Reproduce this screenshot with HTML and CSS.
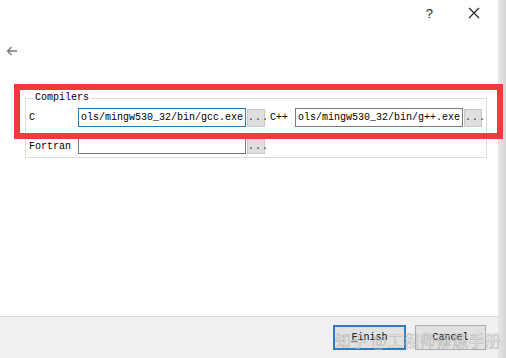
FILE: index.html
```html
<!DOCTYPE html>
<html lang="en">
<head>
    <meta charset="UTF-8">
    <title>Project Wizard - Compilers</title>
    <link rel="stylesheet" href="styles.css">
</head>
<body>
    <div class="window">
        <div class="main">
            <div class="titlebar">
                <span class="title-btn help">?</span>
                <span class="title-btn close">
                    <svg width="12" height="12" viewBox="0 0 12 12"><path d="M1 1 L11 11 M11 1 L1 11" stroke="#222" stroke-width="1.1" fill="none"/></svg>
                </span>
            </div>
            <div class="nav">
                <svg width="12" height="10" viewBox="0 0 12 10"><path d="M11 5 H1.5 M5.5 1 L1.5 5 L5.5 9" stroke="#7a7a7a" stroke-width="1.3" fill="none"/></svg>
            </div>

            <div class="content">
                <fieldset class="group">
                    <legend>Compilers</legend>
                    <div class="rows">
                        <label class="lbl">C</label>
                        <input class="path focused" type="text" value="ols/mingw530_32/bin/gcc.exe">
                        <button class="browse">...</button>
                        <label class="lbl lbl-cpp">C++</label>
                        <input class="path" type="text" value="ols/mingw530_32/bin/g++.exe">
                        <button class="browse">...</button>

                        <label class="lbl">Fortran</label>
                        <input class="path short" type="text" value="">
                        <button class="browse short">...</button>
                    </div>
                </fieldset>
            </div>

            <div class="footer">
                <button class="btn primary"><u>F</u>inish</button>
                <button class="btn">Cancel</button>
            </div>
        </div>
        <div class="edge"></div>

        <!-- annotation frame and watermark lie over the dialog -->
        <div class="highlight"></div>
        <div class="watermark">知乎 @工程师修炼手册</div>
    </div>
</body>
</html>
```

FILE: styles.css
```css
body {
    margin: 0;
    background: #fff;
    font-family: "Liberation Mono", "DejaVu Sans Mono", monospace;
    font-size: 10px;
    color: #000;
}

.window {
    position: relative;
    display: flex;
    width: 506px;
    height: 358px;
    overflow: hidden;
}

.main {
    display: flex;
    flex-direction: column;
    width: 498px;
}

.edge {
    width: 8px;
    background: linear-gradient(to right, #e6e6e6, #d6d6d6);
}

.titlebar {
    display: flex;
    justify-content: flex-end;
    align-items: center;
    height: 26px;
    padding-right: 18px;
}

.title-btn {
    font-family: "Liberation Sans", sans-serif;
    font-size: 13px;
    color: #222;
}

.help {
    margin-right: 35px;
}

.close svg {
    display: block;
}

.nav {
    height: 42px;
    padding: 4px 0 0 6px;
    display: flex;
    align-items: center;
}

.content {
    flex: 1;
    padding: 20px 11px 0 25px;
}

.group {
    margin: 0;
    padding: 0 0 7px 3px;
    border: 1px solid #dcdcdc;
    height: 66px;
    box-sizing: border-box;
}

.group legend {
    margin-left: 4px;
    padding: 0 2px;
    font-size: 10px;
    line-height: 12px;
}

.rows {
    display: grid;
    grid-template-columns: 48px 168px 18px 28px 168px 18px;
    column-gap: 1px;
    row-gap: 11px;
    align-items: center;
    margin-top: 4px;
}

.lbl {
    font-size: 10px;
}

.lbl-cpp {
    padding-left: 4px;
}

.path {
    height: 19px;
    box-sizing: border-box;
    border: 1px solid #7a7a7a;
    padding: 0 2px;
    font-family: "Liberation Mono", "DejaVu Sans Mono", monospace;
    font-size: 10px;
    color: #000;
    background: #fff;
    outline: none;
}

.path.focused {
    border-color: #2b7bb9;
}

.path.short {
    height: 16px;
}

.browse {
    height: 18px;
    box-sizing: border-box;
    border: 1px solid #c8c8c8;
    background: #dedede;
    padding: 0;
    font-family: "Liberation Mono", monospace;
    font-size: 10px;
    color: #333;
    letter-spacing: 1px;
}

.browse.short {
    height: 16px;
}

.footer {
    height: 42px;
    box-sizing: border-box;
    border-top: 1px solid #d9d9d9;
    background: #f0f0f0;
    display: flex;
    justify-content: flex-end;
    align-items: flex-start;
    gap: 9px;
    padding: 8px 12px 0 0;
}

.btn {
    width: 71px;
    height: 25px;
    box-sizing: border-box;
    border: 1px solid #adadad;
    background: #e1e1e1;
    font-family: "Liberation Mono", monospace;
    font-size: 10px;
    color: #000;
    padding: 0;
}

.btn.primary {
    width: 73px;
    border: 2px solid #2f7bbd;
}

.highlight {
    position: absolute;
    left: 14px;
    top: 84px;
    width: 489px;
    height: 55px;
    box-sizing: border-box;
    border: 6px solid #ee3b3d;
}

.watermark {
    position: absolute;
    left: 335px;
    top: 328px;
    font-family: "Noto Sans CJK SC", sans-serif;
    font-size: 16px;
    letter-spacing: 0.3px;
    color: rgba(255, 255, 255, 0.55);
    -webkit-text-stroke: 0.6px rgba(110, 110, 110, 0.45);
    white-space: nowrap;
}
```
